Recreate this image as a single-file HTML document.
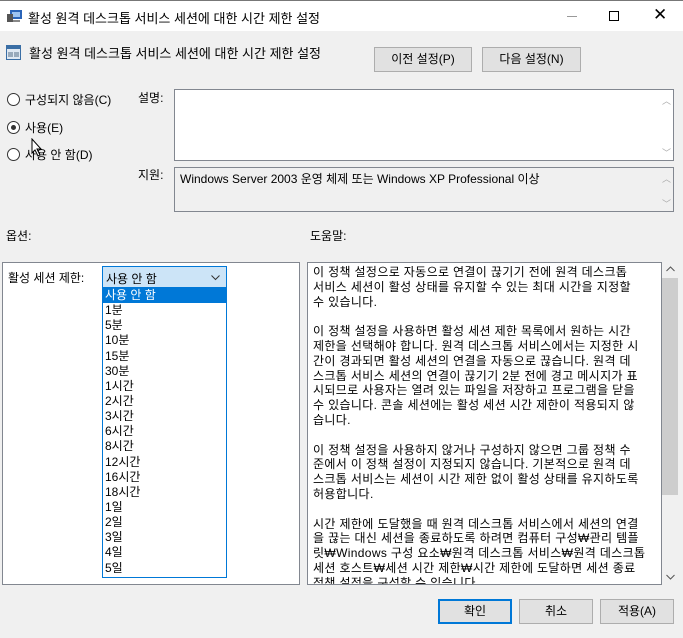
<!DOCTYPE html>
<html><head><meta charset="utf-8"><style>
*{box-sizing:border-box;margin:0;padding:0}
body{width:683px;height:638px;overflow:hidden;background:#f0f0f0;font-family:"Liberation Sans","Noto Sans CJK KR",sans-serif;font-size:12px;color:#000;position:relative}
.a{position:absolute;white-space:nowrap}
.tb{position:absolute;left:0;top:0;width:683px;height:31px;background:#fff;border-top:1px solid #777}
.btn{position:absolute;background:#e1e1e1;border:1px solid #adadad;text-align:center;line-height:22px}
.box{position:absolute;background:#fff;border:1px solid #828790}
.rad{position:absolute;width:13px;height:13px;border:1px solid #333;border-radius:50%;background:#fff}
.sb{position:absolute;color:#aaa;font-size:9px}
.li{height:15.15px;line-height:15px;padding-left:2px}
.help{position:absolute;left:307px;top:262px;width:355px;height:323px;background:#fff;border:1px solid #828790;overflow:hidden;padding:2px 0 0 5px;line-height:14.8px;white-space:nowrap;letter-spacing:0.35px}
</style></head><body>
<div class="tb">
<svg class="a" style="left:7px;top:8px" width="16" height="14"><rect x="3" y="1" width="12" height="9" fill="#2a64b8"/><rect x="5" y="3" width="8" height="5" fill="#9cc3f0"/><rect x="0" y="5" width="6" height="8" fill="#555"/><rect x="6" y="11" width="7" height="2" fill="#888"/></svg>
<div class="a" style="left:28px;top:7px;font-size:13px">활성 원격 데스크톱 서비스 세션에 대한 시간 제한 설정</div>
<div class="a" style="left:567px;top:15px;width:10px;height:1px;background:#999"></div>
<div class="a" style="left:609px;top:10px;width:10px;height:10px;border:1px solid #000"></div>
<div class="a" style="left:653px;top:4px;font-size:17px">✕</div>
</div>
<svg class="a" style="left:6px;top:45px" width="16" height="16"><rect x="0" y="0" width="15" height="15" fill="#3a6ea5"/><rect x="1" y="4" width="13" height="10" fill="#dfe8f2"/><rect x="2" y="7" width="5" height="5" fill="#9ab"/><rect x="8" y="7" width="5" height="5" fill="#9ab"/></svg>
<div class="a" style="left:29px;top:43px;font-size:13px">활성 원격 데스크톱 서비스 세션에 대한 시간 제한 설정</div>
<div class="btn" style="left:374px;top:47px;width:98px;height:25px">이전 설정(P)</div>
<div class="btn" style="left:482px;top:47px;width:99px;height:25px">다음 설정(N)</div>
<div class="rad" style="left:7px;top:93px"></div><div class="a" style="left:25px;top:91px">구성되지 않음(C)</div>
<div class="rad" style="left:7px;top:121px"></div><div class="a" style="left:11px;top:125px;width:5px;height:5px;border-radius:50%;background:#333"></div><div class="a" style="left:25px;top:119px">사용(E)</div>
<div class="rad" style="left:7px;top:148px"></div><div class="a" style="left:25px;top:146px">사용 안 함(D)</div>
<svg class="a" style="left:31px;top:138px" width="12" height="19"><path d="M1 1 L1 15 L4 12 L7 18 L9 17 L6 11 L10 11 Z" fill="#fff" stroke="#000"/></svg>
<div class="a" style="left:138px;top:89px">설명:</div>
<div class="box" style="left:174px;top:89px;width:500px;height:72px"></div>
<div class="sb" style="left:662px;top:94px">︿</div><div class="sb" style="left:662px;top:146px">﹀</div>
<div class="a" style="left:138px;top:166px">지원:</div>
<div class="box" style="left:174px;top:167px;width:500px;height:45px;background:#f0f0f0"></div>
<div class="a" style="left:180px;top:170px">Windows Server 2003 운영 체제 또는 Windows XP Professional 이상</div>
<div class="sb" style="left:662px;top:172px">︿</div><div class="sb" style="left:662px;top:197px">﹀</div>
<div class="a" style="left:6px;top:227px">옵션:</div>
<div class="a" style="left:310px;top:227px">도움말:</div>
<div class="box" style="left:2px;top:262px;width:298px;height:323px"></div>
<div class="a" style="left:8px;top:269px">활성 세션 제한:</div>
<div class="a" style="left:102px;top:266px;width:125px;height:22px;background:#cce4f7;border:1px solid #0078d7;padding:3px 0 0 3px">사용 안 함<svg style="position:absolute;right:6px;top:8px" width="9" height="6"><path d="M0.5 0.5 L4.5 4.5 L8.5 0.5" fill="none" stroke="#333"/></svg></div>
<div class="a" style="left:102px;top:288px;width:125px;height:290px;background:#fff;border:1px solid #0078d7;border-top:none">
<div class="li" style="background:#0078d7;color:#fff">사용 안 함</div>
<div class="li">1분</div><div class="li">5분</div><div class="li">10분</div><div class="li">15분</div><div class="li">30분</div><div class="li">1시간</div><div class="li">2시간</div><div class="li">3시간</div><div class="li">6시간</div><div class="li">8시간</div><div class="li">12시간</div><div class="li">16시간</div><div class="li">18시간</div><div class="li">1일</div><div class="li">2일</div><div class="li">3일</div><div class="li">4일</div><div class="li">5일</div>
</div>
<div class="help">이 정책 설정으로 자동으로 연결이 끊기기 전에 원격 데스크톱<br>서비스 세션이 활성 상태를 유지할 수 있는 최대 시간을 지정할<br>수 있습니다.<br><br>이 정책 설정을 사용하면 활성 세션 제한 목록에서 원하는 시간<br>제한을 선택해야 합니다. 원격 데스크톱 서비스에서는 지정한 시<br>간이 경과되면 활성 세션의 연결을 자동으로 끊습니다. 원격 데<br>스크톱 서비스 세션의 연결이 끊기기 2분 전에 경고 메시지가 표<br>시되므로 사용자는 열려 있는 파일을 저장하고 프로그램을 닫을<br>수 있습니다. 콘솔 세션에는 활성 세션 시간 제한이 적용되지 않<br>습니다.<br><br>이 정책 설정을 사용하지 않거나 구성하지 않으면 그룹 정책 수<br>준에서 이 정책 설정이 지정되지 않습니다. 기본적으로 원격 데<br>스크톱 서비스는 세션이 시간 제한 없이 활성 상태를 유지하도록<br>허용합니다.<br><br>시간 제한에 도달했을 때 원격 데스크톱 서비스에서 세션의 연결<br>을 끊는 대신 세션을 종료하도록 하려면 컴퓨터 구성₩관리 템플<br>릿₩Windows 구성 요소₩원격 데스크톱 서비스₩원격 데스크톱<br>세션 호스트₩세션 시간 제한₩시간 제한에 도달하면 세션 종료<br>정책 설정을 구성할 수 있습니다.</div>
<div class="a" style="left:662px;top:278px;width:16px;height:217px;background:#cdcdcd"></div>
<svg class="a" style="left:666px;top:266px" width="9" height="6"><path d="M0.5 5 L4.5 1 L8.5 5" fill="none" stroke="#555"/></svg>
<svg class="a" style="left:666px;top:574px" width="9" height="6"><path d="M0.5 1 L4.5 5 L8.5 1" fill="none" stroke="#555"/></svg>
<div class="btn" style="left:438px;top:599px;width:74px;height:25px;border:2px solid #0078d7;line-height:20px">확인</div>
<div class="btn" style="left:519px;top:599px;width:74px;height:25px">취소</div>
<div class="btn" style="left:600px;top:599px;width:74px;height:25px">적용(A)</div>
</body></html>
